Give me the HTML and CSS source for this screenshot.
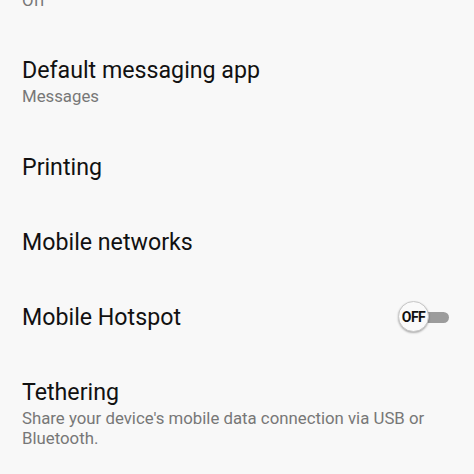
FILE: index.html
```html
<!DOCTYPE html>
<html>
<head>
<meta charset="utf-8">
<link rel="stylesheet" href="styles.css">
</head>
<body>
<div class="list">
  <div class="item item-partial">
    <div class="sub">Off</div>
  </div>
  <div class="item">
    <div class="text">
      <div class="title">Default messaging app</div>
      <div class="sub">Messages</div>
    </div>
  </div>
  <div class="item">
    <div class="text"><div class="title">Printing</div></div>
  </div>
  <div class="item">
    <div class="text"><div class="title">Mobile networks</div></div>
  </div>
  <div class="item">
    <div class="text"><div class="title">Mobile Hotspot</div></div>
    <div class="switch">
      <div class="track"></div>
      <div class="knob">OFF</div>
    </div>
  </div>
  <div class="item">
    <div class="text">
      <div class="title">Tethering</div>
      <div class="sub">Share your device's mobile data connection via USB or Bluetooth.</div>
    </div>
  </div>
</div>
</body>
</html>
```
FILE: styles.css
```css
html, body {
  margin: 0;
  padding: 0;
  background: #f8f8f8;
  width: 474px;
  height: 474px;
  overflow: hidden;
  font-family: Roboto, "Noto Sans", sans-serif;
}
.list {
  margin-top: -10px;
  display: flex;
  flex-direction: column;
}
.item {
  display: flex;
  align-items: center;
  justify-content: space-between;
  padding: 23px 25px 24px 22px;
}
.item-partial {
  padding-top: 0;
  padding-bottom: 23px;
}
.text {
  display: flex;
  flex-direction: column;
  gap: 2px;
}
.title {
  font-size: 23.2px;
  line-height: 28px;
  color: #111;
}
.sub {
  font-size: 16.8px;
  line-height: 20px;
  color: #777;
  padding-right: 10px;
}
.switch {
  position: relative;
  width: 51px;
  height: 28px;
  display: flex;
  align-items: center;
  justify-content: flex-end;
}
.track {
  width: 36px;
  height: 11px;
  border-radius: 6px;
  background: #9c9c9c;
}
.knob {
  position: absolute;
  left: 0;
  top: -2px;
  width: 29px;
  height: 29px;
  border-radius: 50%;
  background: #fafafa;
  border: 1px solid #c8c8c8;
  box-shadow: 0 1px 2px rgba(0,0,0,0.3);
  display: flex;
  align-items: center;
  justify-content: center;
  font-size: 14px;
  font-weight: bold;
  color: #111;
  letter-spacing: -0.5px;
}
```
